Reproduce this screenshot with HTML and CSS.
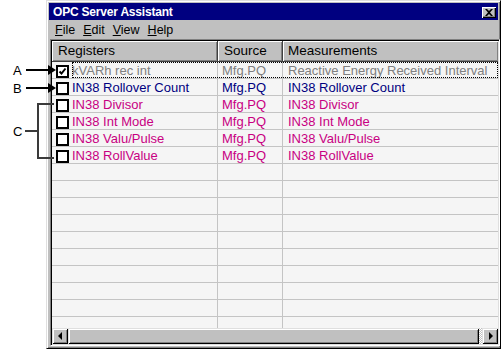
FILE: index.html
```html
<!DOCTYPE html>
<html>
<head>
    <title>OPC Server Assistant</title>
    <link rel="stylesheet" href="styles.css">
</head>
<body>
    <div class="window">
        <div class="titlebar">
            <span class="title">OPC Server Assistant</span>
            <span class="close">
                <svg width="8" height="7" viewBox="0 0 8 7"><path d="M0 0h2l2 2 2-2h2L5 3.5 8 7H6L4 5 2 7H0l3-3.5z" fill="#000"/></svg>
            </span>
        </div>
        <div class="menubar">
            <span class="menu"><u>F</u>ile</span>
            <span class="menu"><u>E</u>dit</span>
            <span class="menu"><u>V</u>iew</span>
            <span class="menu"><u>H</u>elp</span>
        </div>
        <div class="listview">
            <div class="header">
                <div class="hcell">Registers</div>
                <div class="hcell">Source</div>
                <div class="hcell">Measurements</div>
            </div>
            <div class="rows">
                <div class="row gray focused">
                    <div class="cell reg"><span class="check"><svg width="9" height="9" viewBox="0 0 9 9"><path d="M1.5 4.5l2 2 4-5" stroke="#000" stroke-width="2" fill="none"/></svg></span><span class="label">kVARh rec int</span></div>
                    <div class="cell src">Mfg.PQ</div>
                    <div class="cell meas">Reactive Energy Received Interval</div>
                </div>
                <div class="row navy">
                    <div class="cell reg"><span class="check"></span><span class="label">IN38 Rollover Count</span></div>
                    <div class="cell src">Mfg.PQ</div>
                    <div class="cell meas">IN38 Rollover Count</div>
                </div>
                <div class="row pink">
                    <div class="cell reg"><span class="check"></span><span class="label">IN38 Divisor</span></div>
                    <div class="cell src">Mfg.PQ</div>
                    <div class="cell meas">IN38 Divisor</div>
                </div>
                <div class="row pink">
                    <div class="cell reg"><span class="check"></span><span class="label">IN38 Int Mode</span></div>
                    <div class="cell src">Mfg.PQ</div>
                    <div class="cell meas">IN38 Int Mode</div>
                </div>
                <div class="row pink">
                    <div class="cell reg"><span class="check"></span><span class="label">IN38 Valu/Pulse</span></div>
                    <div class="cell src">Mfg.PQ</div>
                    <div class="cell meas">IN38 Valu/Pulse</div>
                </div>
                <div class="row pink">
                    <div class="cell reg"><span class="check"></span><span class="label">IN38 RollValue</span></div>
                    <div class="cell src">Mfg.PQ</div>
                    <div class="cell meas">IN38 RollValue</div>
                </div>
                <div class="row"><div class="cell reg"></div><div class="cell src"></div><div class="cell meas"></div></div>
                <div class="row"><div class="cell reg"></div><div class="cell src"></div><div class="cell meas"></div></div>
                <div class="row"><div class="cell reg"></div><div class="cell src"></div><div class="cell meas"></div></div>
                <div class="row"><div class="cell reg"></div><div class="cell src"></div><div class="cell meas"></div></div>
                <div class="row"><div class="cell reg"></div><div class="cell src"></div><div class="cell meas"></div></div>
                <div class="row"><div class="cell reg"></div><div class="cell src"></div><div class="cell meas"></div></div>
                <div class="row"><div class="cell reg"></div><div class="cell src"></div><div class="cell meas"></div></div>
                <div class="row"><div class="cell reg"></div><div class="cell src"></div><div class="cell meas"></div></div>
                <div class="row"><div class="cell reg"></div><div class="cell src"></div><div class="cell meas"></div></div>
                <div class="row"><div class="cell reg"></div><div class="cell src"></div><div class="cell meas"></div></div>
            </div>
            <div class="hscroll">
                <div class="sbtn"><span class="arrow-left"></span></div>
                <div class="thumb"></div>
                <div class="track"></div>
                <div class="sbtn"><span class="arrow-right"></span></div>
            </div>
        </div>
    </div>

    <svg class="callouts" width="502" height="349" viewBox="0 0 502 349">
        <text x="13" y="75">A</text>
        <line x1="26" y1="70" x2="49" y2="70" stroke="#000" stroke-width="2"/>
        <polygon points="48,65 56,70 48,75" fill="#000"/>
        <text x="13" y="93">B</text>
        <line x1="26" y1="88" x2="49" y2="88" stroke="#000" stroke-width="2"/>
        <polygon points="48,83 56,88 48,93" fill="#000"/>
        <text x="13" y="136">C</text>
        <path d="M25 131H38M54 104H38V158H54" stroke="#3a3a3a" stroke-width="2" fill="none"/>
    </svg>
</body>
</html>
```

FILE: styles.css
```css
* {
    margin: 0;
    padding: 0;
    box-sizing: border-box;
}

body {
    width: 502px;
    height: 349px;
    overflow: hidden;
    background: #fff;
    font-family: "Liberation Sans", Arial, sans-serif;
    font-size: 13px;
    position: relative;
}

.window {
    margin-left: 46px;
    width: 455px;
    height: 349px;
    background: #c0c0c0;
    border: 1px solid;
    border-color: #dfdfdf #000 #000 #dfdfdf;
    box-shadow: inset 1px 1px #fff, inset -1px -1px #808080;
    padding: 2px;
    display: flex;
    flex-direction: column;
}

.titlebar {
    height: 17px;
    background: #000080;
    display: flex;
    align-items: center;
    justify-content: space-between;
    padding: 0 2px 0 4px;
}

.title {
    color: #fff;
    font-weight: bold;
    font-size: 12px;
    letter-spacing: -0.2px;
}

.close {
    width: 14px;
    height: 11px;
    background: #c0c0c0;
    box-shadow: inset 1px 1px #fff, inset -1px -1px #000, inset -2px -2px #808080;
    display: flex;
    align-items: center;
    justify-content: center;
    margin-top: 1px;
}

.menubar {
    height: 19px;
    display: flex;
    align-items: center;
    padding-left: 2px;
}

.menu {
    padding: 0 4px;
    font-size: 12.5px;
    color: #000;
}

.listview {
    flex: 1;
    width: 450px;
    margin-left: 1px;
    border: 1px solid;
    border-color: #808080 #fff #fff #808080;
    box-shadow: inset 1px 1px #000, inset -1px -1px #dfdfdf;
    padding: 1px;
    background: #f5f5f5;
    display: flex;
    flex-direction: column;
    overflow: hidden;
}

.header {
    height: 21px;
    flex: none;
    display: grid;
    grid-template-columns: 166px 65px 1fr;
}

.hcell {
    background: #c0c0c0;
    box-shadow: inset 1px 1px #fff, inset -1px -1px #808080;
    border-right: 1px solid #404040;
    border-bottom: 1px solid #404040;
    line-height: 20px;
    padding-left: 6px;
    font-size: 13.5px;
    color: #000;
}

.hcell:last-child {
    padding-left: 5px;
    border-right: none;
}

.rows {
    flex: 1;
    overflow: hidden;
}

.row {
    height: 17px;
    display: grid;
    grid-template-columns: 166px 65px 1fr;
    border-bottom: 1px solid #c4c4c4;
    position: relative;
}

.row.focused::after {
    content: "";
    position: absolute;
    left: 20px;
    right: 0;
    top: 0;
    bottom: 0;
    border: 1px dotted #000;
}

.cell {
    line-height: 17px;
    white-space: nowrap;
    overflow: hidden;
    border-right: 1px solid #c4c4c4;
}

.cell.reg {
    display: flex;
    align-items: center;
    padding-left: 4px;
}

.cell.src {
    padding-left: 4px;
}

.cell.meas {
    padding-left: 5px;
    border-right: none;
}

.check {
    width: 13px;
    height: 13px;
    border: 2px solid #000;
    background: #fff;
    margin-top: 2px;
    margin-right: 3px;
    display: flex;
    align-items: center;
    justify-content: center;
}

.gray { color: #808080; }
.navy { color: #000080; }
.pink { color: #c80082; }

.hscroll {
    height: 16px;
    flex: none;
    display: flex;
}

.sbtn {
    width: 16px;
    height: 16px;
    background: #c0c0c0;
    box-shadow: inset 1px 1px #dfdfdf, inset -1px -1px #000, inset 2px 2px #fff, inset -2px -2px #808080;
    display: flex;
    align-items: center;
    justify-content: center;
}

.arrow-left {
    border-right: 4px solid #000;
    border-top: 4px solid transparent;
    border-bottom: 4px solid transparent;
}

.arrow-right {
    border-left: 4px solid #000;
    border-top: 4px solid transparent;
    border-bottom: 4px solid transparent;
    margin-left: 1px;
}

.thumb {
    width: 411px;
    height: 16px;
    background: #c0c0c0;
    box-shadow: inset 1px 1px #dfdfdf, inset -1px -1px #000, inset 2px 2px #fff, inset -2px -2px #808080;
}

.track {
    flex: 1;
    background: repeating-conic-gradient(#fff 0 25%, #c0c0c0 0 50%) 0 0 / 2px 2px;
}

.callouts {
    position: absolute;
    left: 0;
    top: 0;
    pointer-events: none;
    font-family: "Liberation Sans", Arial, sans-serif;
    font-size: 13px;
}
```
